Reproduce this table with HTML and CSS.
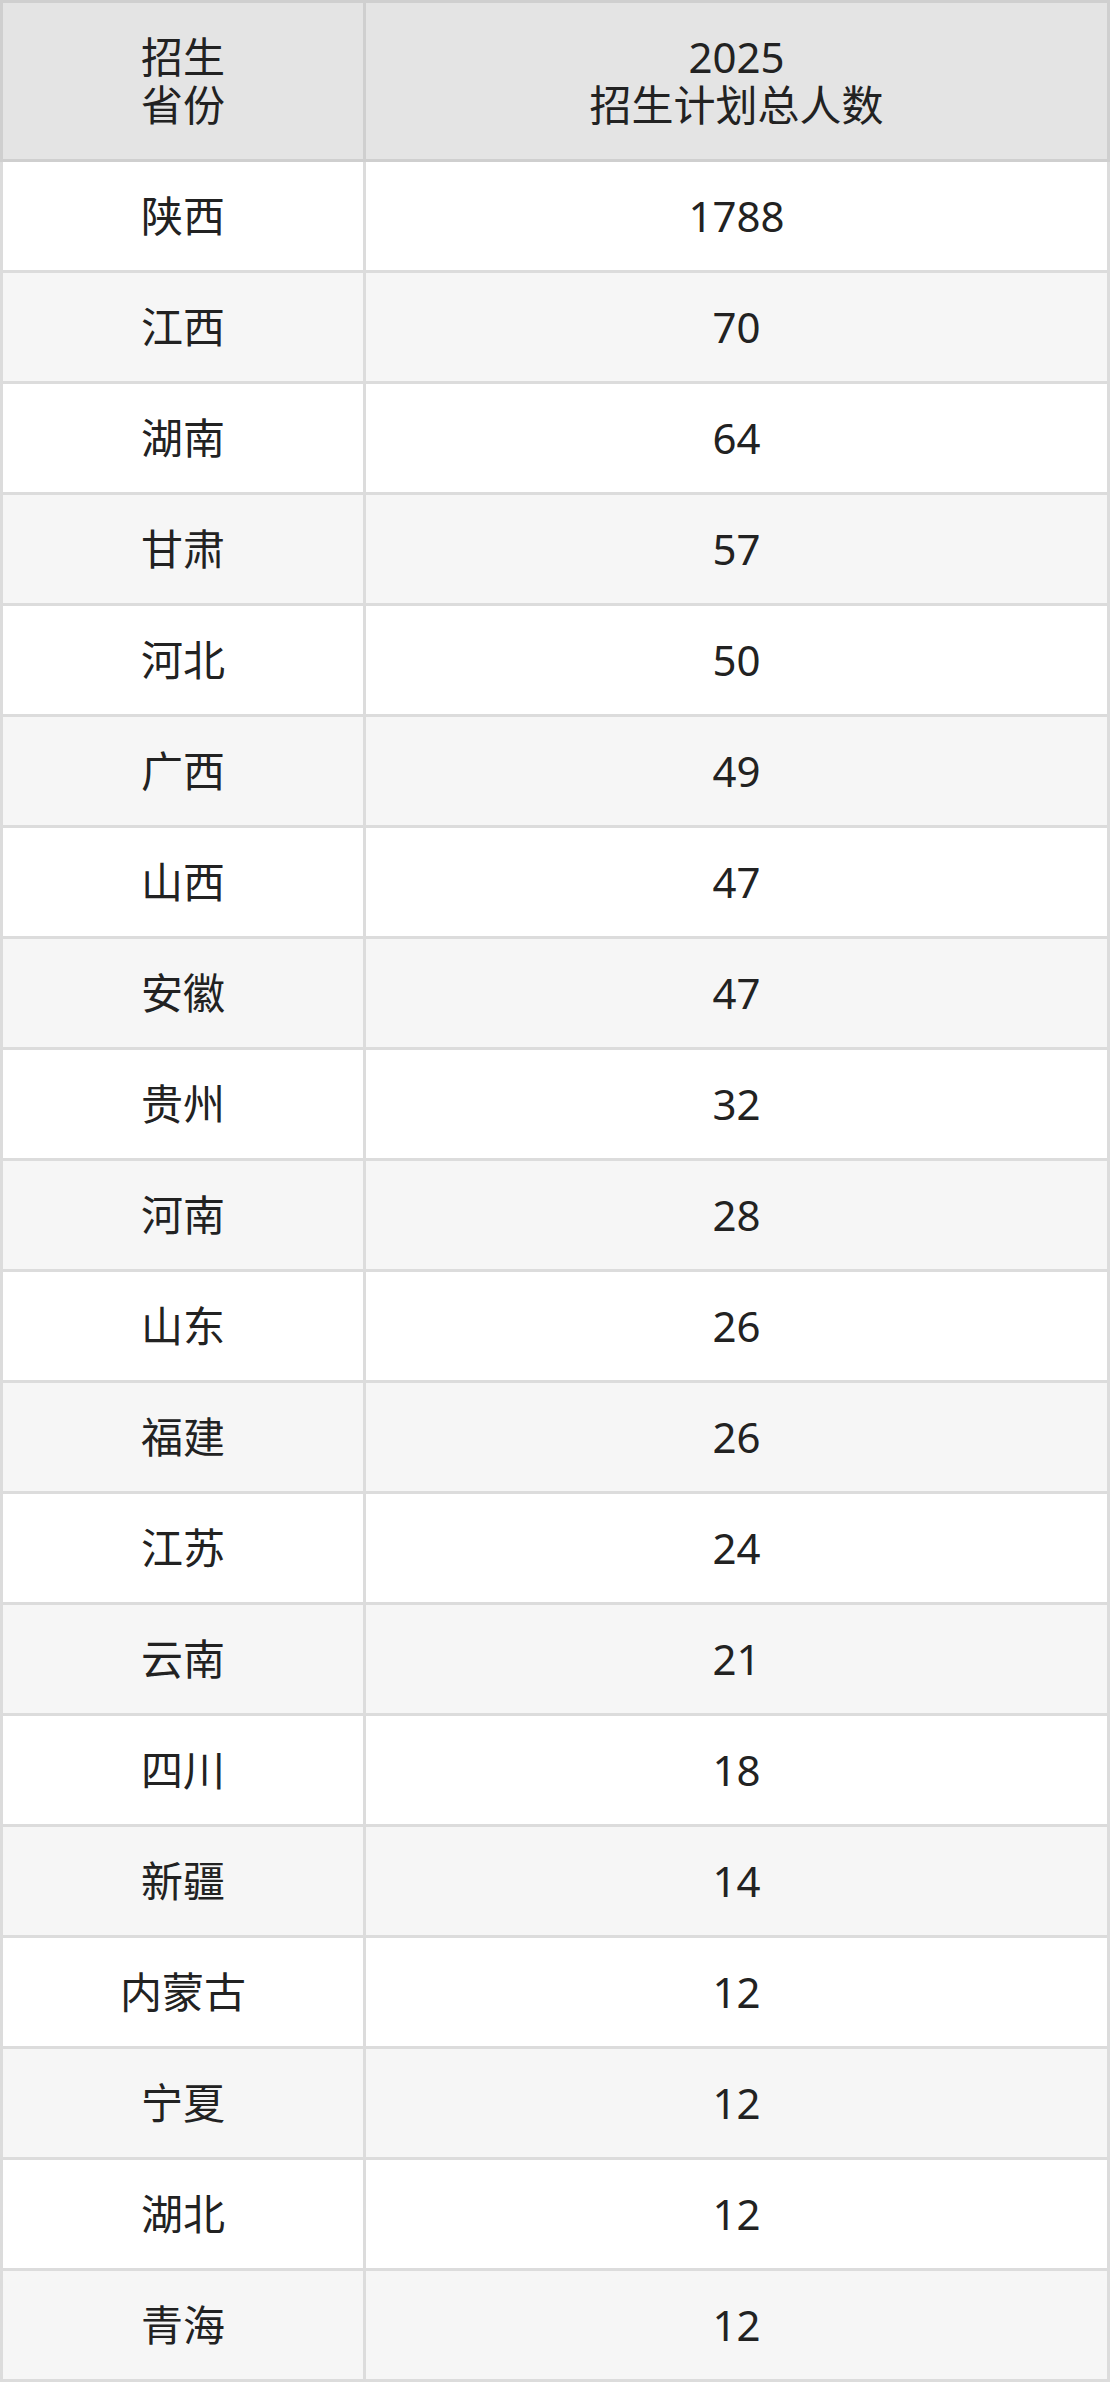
FILE: index.html
```html
<!DOCTYPE html>
<html lang="zh-CN">
<head>
<meta charset="utf-8">
<link rel="stylesheet" href="styles.css">
</head>
<body>
<table class="plan">
<thead>
<tr><th class="c1">招生<br>省份</th><th class="c2">2025<br>招生计划总人数</th></tr>
</thead>
<tbody>
<tr><td>陕西</td><td>1788</td></tr>
<tr><td>江西</td><td>70</td></tr>
<tr><td>湖南</td><td>64</td></tr>
<tr><td>甘肃</td><td>57</td></tr>
<tr><td>河北</td><td>50</td></tr>
<tr><td>广西</td><td>49</td></tr>
<tr><td>山西</td><td>47</td></tr>
<tr><td>安徽</td><td>47</td></tr>
<tr><td>贵州</td><td>32</td></tr>
<tr><td>河南</td><td>28</td></tr>
<tr><td>山东</td><td>26</td></tr>
<tr><td>福建</td><td>26</td></tr>
<tr><td>江苏</td><td>24</td></tr>
<tr><td>云南</td><td>21</td></tr>
<tr><td>四川</td><td>18</td></tr>
<tr><td>新疆</td><td>14</td></tr>
<tr><td>内蒙古</td><td>12</td></tr>
<tr><td>宁夏</td><td>12</td></tr>
<tr><td>湖北</td><td>12</td></tr>
<tr><td>青海</td><td>12</td></tr>
</tbody>
</table>
</body>
</html>
```
FILE: styles.css
```css
html, body {
  margin: 0;
  padding: 0;
  background: #ffffff;
}
.plan {
  width: 1110px;
  border-collapse: collapse;
  table-layout: fixed;
  font-family: "Noto Sans", "Open Sans", "Noto Sans CJK SC", sans-serif;
  font-size: 42px;
  color: #222222;
}
.plan th, .plan td {
  border: 3px solid #dcdcdc;
  text-align: center;
  vertical-align: middle;
  padding: 0;
  font-weight: normal;
}
.plan th {
  background: #e4e4e4;
  border-color: #cfcfcf;
  height: 156px;
  line-height: 48px;
}
.plan .c1 {
  width: 360px;
}
.plan td {
  height: 108px;
  line-height: 48px;
}
.plan tbody tr:nth-child(even) td {
  background: #f6f6f6;
}
```
